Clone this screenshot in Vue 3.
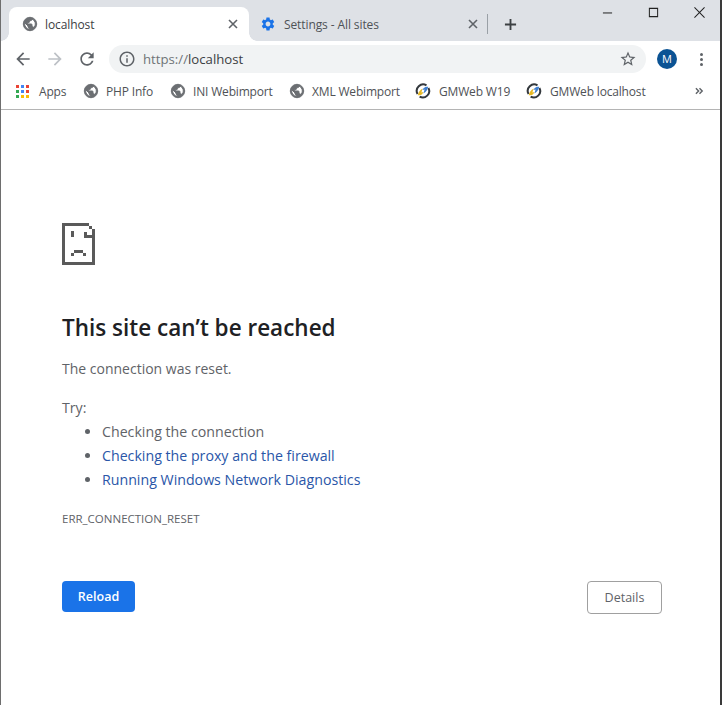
<template>
  <div class="page">
    <div class="window">
      <div class="tabstrip">
        <div class="tab active">
          <svg class="tab-icon globe" viewBox="0 0 24 24"><path :d="globe" /></svg>
          <span class="tab-title">localhost</span>
          <svg class="tab-close" viewBox="0 0 10 10"><path d="M1 1l8 8M9 1l-8 8" /></svg>
        </div>
        <div class="tab settings">
          <svg class="tab-icon" viewBox="0 0 24 24"><path fill="#1a73e8" :d="gear" /></svg>
          <span class="tab-title">Settings - All sites</span>
          <svg class="tab-close" viewBox="0 0 10 10"><path d="M1 1l8 8M9 1l-8 8" /></svg>
        </div>
        <div class="tab-sep"></div>
        <svg class="new-tab" viewBox="0 0 14 14"><path d="M7 1v12M1 7h12" /></svg>
        <div class="win-controls">
          <svg viewBox="0 0 12 12"><path d="M1 6.5h10" /></svg>
          <svg viewBox="0 0 12 12"><path d="M1.5 1.5h9v9h-9z" /></svg>
          <svg viewBox="0 0 12 12"><path d="M.5 .5l11 11M11.5 .5l-11 11" /></svg>
        </div>
      </div>

      <div class="toolbar">
        <svg class="nav" viewBox="0 0 24 24"><path fill="#5f6368" d="M20 11H7.83l5.59-5.59L12 4l-8 8 8 8 1.41-1.41L7.83 13H20v-2z" /></svg>
        <svg class="nav" viewBox="0 0 24 24"><path fill="#bdc1c6" d="M12 4l-1.41 1.41L16.17 11H4v2h12.17l-5.58 5.59L12 20l8-8z" /></svg>
        <svg class="nav" viewBox="0 0 24 24"><path fill="#5f6368" d="M17.65 6.35C16.2 4.9 14.21 4 12 4c-4.42 0-7.99 3.58-7.99 8s3.57 8 7.99 8c3.73 0 6.84-2.55 7.73-6h-2.08c-.82 2.33-3.04 4-5.65 4-3.31 0-6-2.69-6-6s2.69-6 6-6c1.66 0 3.14.69 4.22 1.78L13 11h7V4l-2.35 2.35z" /></svg>
        <div class="omnibox">
          <svg class="info" viewBox="0 0 24 24"><path fill="#5f6368" d="M11 7h2v2h-2zm0 4h2v6h-2zm1-9C6.48 2 2 6.48 2 12s4.48 10 10 10 10-4.48 10-10S17.52 2 12 2zm0 18c-4.41 0-8-3.59-8-8s3.59-8 8-8 8 3.59 8 8-3.59 8-8 8z" /></svg>
          <span class="url"><span class="scheme">https://</span>localhost</span>
          <svg class="star" viewBox="0 0 24 24"><path fill="#5f6368" d="M22 9.24l-7.19-.62L12 2 9.19 8.63 2 9.24l5.46 4.73L5.82 21 12 17.27 18.18 21l-1.63-7.03L22 9.24zM12 15.4l-3.76 2.27 1-4.28-3.32-2.88 4.38-.38L12 6.1l1.71 4.04 4.38.38-3.32 2.88 1 4.28L12 15.4z" /></svg>
        </div>
        <div class="avatar">M</div>
        <div class="menu"><i></i><i></i><i></i></div>
      </div>

      <div class="bookmarks">
        <div class="bookmark apps-item">
          <div class="apps">
            <i v-for="(c, i) in appColors" :key="i" :style="{ background: c }"></i>
          </div>
          <span>Apps</span>
        </div>
        <div v-for="b in bookmarks" :key="b.label" class="bookmark" :style="{ width: b.width + 'px' }">
          <svg v-if="b.kind === 'globe'" class="bm-icon globe" viewBox="0 0 24 24"><path :d="globe" /></svg>
          <svg v-else class="bm-icon gm" viewBox="0 0 16 16">
            <path d="M11.5 2.4A6.4 6.4 0 0 0 2.6 11" fill="none" stroke="#33383d" stroke-width="2" />
            <path d="M4.6 13.6A6.4 6.4 0 0 0 13.4 5" fill="none" stroke="#33383d" stroke-width="2" />
            <path d="M2.8 12.2C3.4 9 5 7 7.6 5.4L6.4 9.6 8.6 9C7.6 11.4 5.6 12.8 2.8 12.2z" fill="#e8b923" />
            <path d="M13.2 3.8C12.6 7 11 9 8.4 10.6L9.6 6.4 7.4 7C8.4 4.6 10.4 3.2 13.2 3.8z" fill="#3f7fd0" />
          </svg>
          <span>{{ b.label }}</span>
        </div>
        <svg class="more" viewBox="0 0 10 8"><path d="M1 1l3 3-3 3M5 1l3 3-3 3" /></svg>
      </div>

      <main class="content">
        <svg class="sad" viewBox="0 0 11 14" shape-rendering="crispEdges">
          <path fill="#5a5a5a" fill-rule="evenodd" d="M0 0H9V1H10V2H11V14H0ZM1 1V13H10V5H7.33V3H8.33V4H10V2H9V1Z" />
          <path fill="#5a5a5a" d="M3 2.67h1v2h-1zM4 9h3v1H4zM3 10h1v1H3zM7 10h1v1H7z" />
        </svg>
        <h1>This site can’t be reached</h1>
        <p class="reason">The connection was reset.</p>
        <p class="try">Try:</p>
        <ul>
          <li>Checking the connection</li>
          <li><a>Checking the proxy and the firewall</a></li>
          <li><a>Running Windows Network Diagnostics</a></li>
        </ul>
        <p class="code">ERR_CONNECTION_RESET</p>
        <div class="buttons">
          <button class="reload">Reload</button>
          <button class="details">Details</button>
        </div>
      </main>
    </div>
  </div>
</template>

<script setup>
const globe = 'M12 2C6.48 2 2 6.48 2 12s4.48 10 10 10 10-4.48 10-10S17.52 2 12 2zm-1 17.93c-3.95-.49-7-3.85-7-7.93 0-.62.08-1.21.21-1.79L9 15v1c0 1.1.9 2 2 2v1.93zm6.9-2.54c-.26-.81-1-1.39-1.9-1.39h-1v-3c0-.55-.45-1-1-1H8v-2h2c.55 0 1-.45 1-1V7h2c1.1 0 2-.9 2-2v-.41c2.93 1.19 5 4.06 5 7.41 0 2.08-.8 3.97-2.1 5.39z'
const gear = 'M19.14 12.94c.04-.3.06-.61.06-.94 0-.32-.02-.64-.07-.94l2.03-1.58c.18-.14.23-.41.12-.61l-1.92-3.32c-.12-.22-.37-.29-.59-.22l-2.39.96c-.5-.38-1.03-.7-1.62-.94l-.36-2.54c-.04-.24-.24-.41-.48-.41h-3.84c-.24 0-.43.17-.47.41l-.36 2.54c-.59.24-1.13.57-1.62.94l-2.39-.96c-.22-.08-.47 0-.59.22L2.74 8.87c-.12.21-.08.47.12.61l2.03 1.58c-.05.3-.09.63-.09.94s.02.64.07.94l-2.03 1.58c-.18.14-.23.41-.12.61l1.92 3.32c.12.22.37.29.59.22l2.39-.96c.5.38 1.03.7 1.62.94l.36 2.54c.05.24.24.41.48.41h3.84c.24 0 .44-.17.47-.41l.36-2.54c.59-.24 1.13-.56 1.62-.94l2.39.96c.22.08.47 0 .59-.22l1.92-3.32c.12-.22.07-.47-.12-.61l-2.01-1.58zM12 15.6c-1.98 0-3.6-1.62-3.6-3.6s1.62-3.6 3.6-3.6 3.6 1.62 3.6 3.6-1.62 3.6-3.6 3.6z'

const appColors = ['#ea4335', '#4285f4', '#ea4335', '#34a853', '#4285f4', '#ea4335', '#34a853', '#fbbc05', '#fbbc05']

const bookmarks = [
  { label: 'PHP Info', kind: 'globe', width: 87 },
  { label: 'INI Webimport', kind: 'globe', width: 119 },
  { label: 'XML Webimport', kind: 'globe', width: 126 },
  { label: 'GMWeb W19', kind: 'gm', width: 111 },
  { label: 'GMWeb localhost', kind: 'gm', width: 160 }
]
</script>

<style>
html, body {
  margin: 0;
  background: #fff;
}
</style>

<style scoped>
.page {
  width: 724px;
  height: 705px;
  background: #fff;
}

.window {
  box-sizing: border-box;
  width: 722px;
  height: 705px;
  border-left: 1px solid #6e6e6e;
  border-right: 2px solid #3a3a3a;
  background: #fff;
  font-family: "Open Sans", "Noto Sans", sans-serif;
  overflow: hidden;
}

.tabstrip {
  display: flex;
  align-items: flex-end;
  height: 41px;
  padding-left: 8px;
  background: #dee1e6;
  position: relative;
}

.tab {
  display: flex;
  align-items: center;
  box-sizing: border-box;
  width: 240px;
  height: 34px;
  padding: 0 11px 0 13px;
  position: relative;
  font-size: 12px;
  color: #4f5256;
}

.tab.settings {
  padding-left: 11px;
}

.tab.settings .tab-icon {
  margin-right: 8px;
}

.tab.active {
  background: #fff;
  border-radius: 8px 8px 0 0;
  color: #3c4043;
}

.tab.active::before,
.tab.active::after {
  content: "";
  position: absolute;
  bottom: 0;
  width: 8px;
  height: 8px;
}

.tab.active::before {
  left: -8px;
  background: radial-gradient(circle at 0 0, #dee1e6 7.5px, #fff 8px);
}

.tab.active::after {
  right: -8px;
  background: radial-gradient(circle at 100% 0, #dee1e6 7.5px, #fff 8px);
}

.tab-icon {
  width: 16px;
  height: 16px;
  flex: none;
  margin-right: 7px;
}

.globe path {
  fill: #6b6e72;
  stroke: #6b6e72;
  stroke-width: 1.5;
}

.tab-title {
  flex: 1;
  letter-spacing: -0.1px;
}

.tab-close {
  width: 10px;
  height: 10px;
  flex: none;
}

.tab-close path {
  stroke: #5f6368;
  stroke-width: 1.6;
  fill: none;
}

.tab-sep {
  width: 1px;
  height: 20px;
  margin: 0 0 7px -2px;
  background: #9aa0a6;
  position: relative;
}

.new-tab {
  width: 13px;
  height: 13px;
  margin: 0 0 10px 16px;
}

.new-tab path {
  stroke: #3c4043;
  stroke-width: 2;
  fill: none;
}

.win-controls {
  position: absolute;
  top: 7px;
  right: 15px;
  display: flex;
  gap: 35px;
}

.win-controls svg {
  width: 11px;
  height: 11px;
}

.win-controls path {
  stroke: #222;
  stroke-width: 1.1;
  fill: none;
}

.toolbar {
  display: flex;
  align-items: center;
  height: 36px;
  padding-left: 12px;
}

.nav {
  width: 20px;
  height: 20px;
  flex: none;
  margin-right: 12px;
}

.omnibox {
  display: flex;
  align-items: center;
  box-sizing: border-box;
  width: 537px;
  height: 28px;
  padding: 0 9px 0 9px;
  border-radius: 14px;
  background: #f1f3f4;
}

.info {
  width: 18px;
  height: 18px;
  flex: none;
  margin-right: 7px;
}

.url {
  flex: 1;
  font-size: 13.2px;
  color: #3c4043;
}

.scheme {
  color: #6f7377;
}

.star {
  width: 18px;
  height: 18px;
  flex: none;
}

.avatar {
  width: 20px;
  height: 20px;
  flex: none;
  margin-left: 11px;
  border-radius: 50%;
  background: #0b5394;
  color: #fff;
  font-size: 11px;
  line-height: 20px;
  text-align: center;
}

.menu {
  display: flex;
  flex-direction: column;
  gap: 2px;
  margin-left: 23px;
}

.menu i {
  width: 3px;
  height: 3px;
  border-radius: 50%;
  background: #5f6368;
}

.bookmarks {
  display: flex;
  align-items: center;
  box-sizing: border-box;
  height: 33px;
  padding: 0 0 4px 15px;
  border-bottom: 1px solid #b4b4b4;
}

.bookmark {
  display: flex;
  align-items: center;
  flex: none;
  font-size: 12px;
  color: #4f5256;
  letter-spacing: -0.17px;
  white-space: nowrap;
}

.apps-item {
  width: 67px;
}

.apps {
  display: grid;
  grid-template-columns: repeat(3, 3px);
  gap: 2px;
  margin-right: 10px;
}

.apps i {
  width: 3px;
  height: 3px;
}

.bm-icon {
  width: 16px;
  height: 16px;
  flex: none;
  margin-right: 7px;
}

.bm-icon.gm {
  margin-right: 8px;
}

.more {
  width: 9px;
  height: 8px;
  margin-left: 9px;
}

.more path {
  stroke: #5f6368;
  stroke-width: 1.6;
  fill: none;
}

.content {
  box-sizing: border-box;
  width: 661px;
  padding: 113px 0 0 61px;
  color: #5f6368;
  font-size: 14.2px;
}

.sad {
  display: block;
  width: 33px;
  height: 42px;
}

h1 {
  margin: 47px 0 0;
  color: #202124;
  font-size: 22.5px;
  line-height: 32px;
  font-weight: 600;
}

p {
  margin: 0;
}

.reason {
  margin-top: 15px;
  font-size: 14px;
  line-height: 20px;
}

.try {
  margin-top: 19px;
  line-height: 20px;
}

ul {
  margin: 2px 0 0;
  padding-left: 40px;
}

li {
  line-height: 24px;
}

li a {
  color: #2a56a8;
}

.code {
  margin-top: 19px;
  font-size: 11.5px;
  line-height: 16px;
}

.buttons {
  display: flex;
  justify-content: space-between;
  align-items: flex-start;
  margin-top: 54px;
}

button {
  box-sizing: border-box;
  border-radius: 4px;
  font-family: inherit;
  font-size: 12.5px;
  padding: 0;
}

.reload {
  width: 73px;
  height: 31px;
  border: none;
  background: #1a73e8;
  color: #fff;
  font-weight: 600;
}

.details {
  width: 75px;
  height: 33px;
  border: 1px solid #a0a0a0;
  background: #fff;
  color: #5f6368;
}
</style>
